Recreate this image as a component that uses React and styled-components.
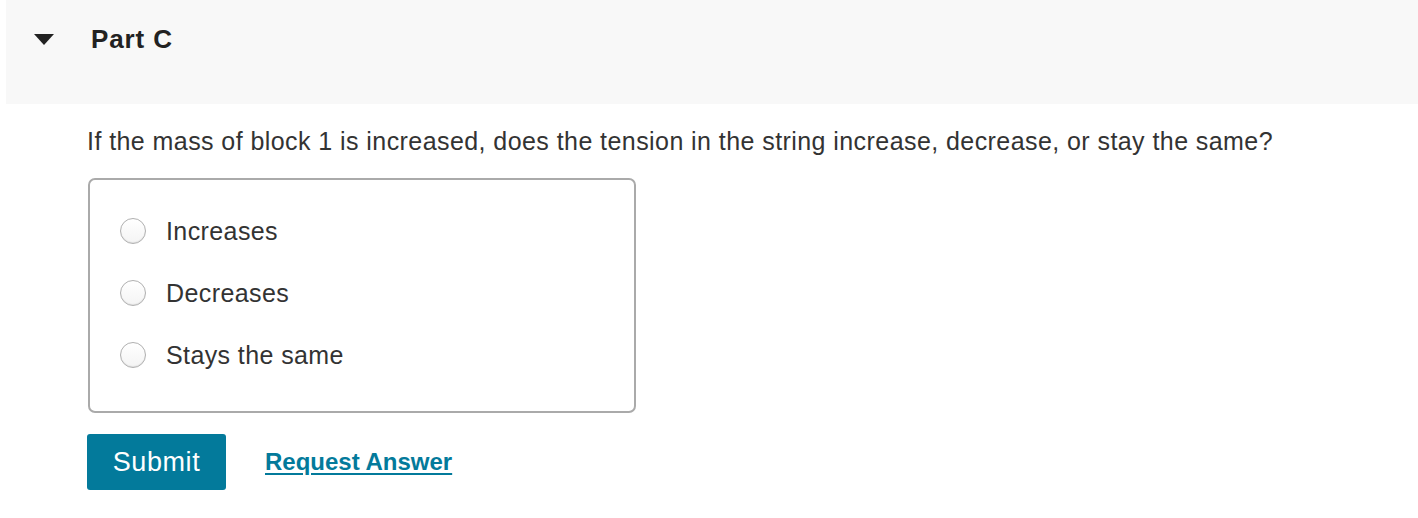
import React from "react";
import styled, { createGlobalStyle } from "styled-components";

const Global = createGlobalStyle`
  html, body { margin: 0; padding: 0; background: #fff; }
  body { font-family: "Liberation Sans", Arial, Helvetica, sans-serif; color: #333; }
`;

const Page = styled.div`
  width: 1418px;
`;

const Header = styled.div`
  margin-left: 6px;
  height: 104px;
  background: #f8f8f8;
  display: flex;
  align-items: flex-start;
  padding-top: 24px;
  box-sizing: border-box;
`;

const Toggle = styled.span`
  width: 0;
  height: 0;
  margin-left: 28px;
  margin-top: 10px;
  border-left: 10px solid transparent;
  border-right: 10px solid transparent;
  border-top: 11px solid #222;
`;

const Title = styled.h2`
  margin: 0 0 0 37px;
  font-size: 26px;
  letter-spacing: 0.9px;
  line-height: 30px;
  font-weight: 700;
  color: #222;
`;

const Body = styled.div`
  padding: 22px 0 0 87px;
`;

const Question = styled.p`
  margin: 0;
  font-size: 25px;
  letter-spacing: 0.43px;
  line-height: 30px;
  color: #333;
`;

const Choices = styled.div`
  margin-top: 22px;
  margin-left: 1px;
  width: 548px;
  height: 235px;
  box-sizing: border-box;
  border: 2px solid #aaa;
  border-radius: 7px;
  padding: 30px 0 0 30px;
  display: flex;
  flex-direction: column;
  gap: 20px;
`;

const Choice = styled.label`
  display: flex;
  align-items: center;
  gap: 20px;
  font-size: 25px;
  letter-spacing: 0.4px;
  line-height: 42px;
  color: #333;
  cursor: pointer;
`;

const Radio = styled.span`
  width: 26px;
  height: 26px;
  box-sizing: border-box;
  border-radius: 50%;
  border: 1px solid #b0b0b0;
  background: linear-gradient(#fff, #f4f4f4);
  box-shadow: inset 0 -1px 1px rgba(0,0,0,0.08);
`;

const Actions = styled.div`
  margin-top: 21px;
  display: flex;
  align-items: center;
  gap: 39px;
`;

const SubmitButton = styled.button`
  width: 139px;
  height: 56px;
  border: none;
  border-radius: 3px;
  background: #037a9b;
  color: #fff;
  font-family: "Liberation Sans", Arial, sans-serif;
  font-size: 27px;
  letter-spacing: 0.6px;
  padding: 0;
  cursor: pointer;
`;

const LinkButton = styled.a`
  font-size: 24px;
  font-weight: 700;
  color: #037a9b;
  text-decoration: underline;
  text-underline-offset: 3px;
  text-decoration-thickness: 2px;
  cursor: pointer;
`;

const options = ["Increases", "Decreases", "Stays the same"];

export default function App() {
  return (
    <Page>
      <Global />
      <Header>
        <Toggle />
        <Title>Part C</Title>
      </Header>
      <Body>
        <Question>
          If the mass of block 1 is increased, does the tension in the string increase, decrease, or stay the same?
        </Question>
        <Choices>
          {options.map((o) => (
            <Choice key={o}>
              <Radio />
              {o}
            </Choice>
          ))}
        </Choices>
        <Actions>
          <SubmitButton>Submit</SubmitButton>
          <LinkButton>Request Answer</LinkButton>
        </Actions>
      </Body>
    </Page>
  );
}
